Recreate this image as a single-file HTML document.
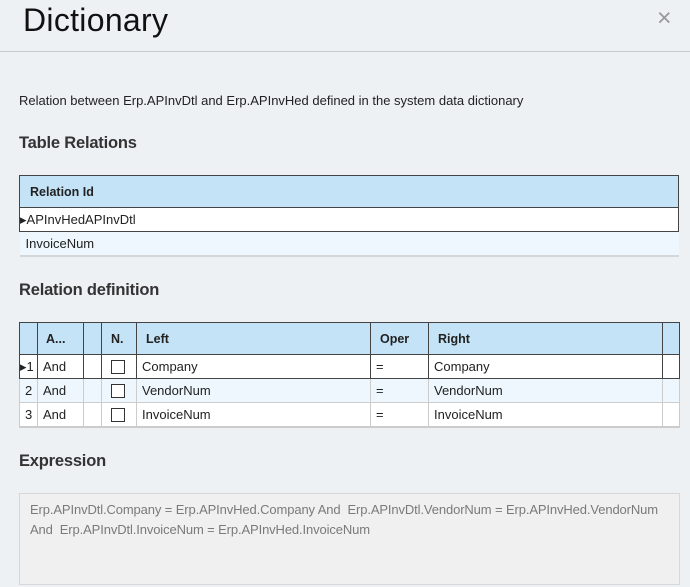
<!DOCTYPE html>
<html><head><style>
body{margin:0;width:690px;height:587px;overflow:hidden;background:#eef1f4;font-family:"Liberation Sans",sans-serif;color:#222;position:relative}
.a{position:absolute;white-space:nowrap}
h1{position:absolute;left:23px;top:2px;margin:0;font-weight:normal;font-size:32px;color:#111;letter-spacing:0.3px}
.h{font-size:16.5px;font-weight:bold;color:#333;letter-spacing:-0.2px}
table{position:absolute;border-collapse:collapse;font-size:13px;table-layout:fixed}
td{padding:0 0 0 5px;white-space:nowrap;overflow:hidden}
.hd td{background:#c4e3f6;font-weight:bold;font-size:12.5px;border:1px solid #444}
.cb{display:inline-block;width:12px;height:12px;border:1.5px solid #333;background:#fff;vertical-align:middle}
</style></head><body>
<h1>Dictionary</h1>
<div class="a" style="left:657px;top:4px;font-size:25px;color:#999">×</div>
<div class="a" style="left:0;top:51px;width:690px;height:1px;background:#c8ccd0"></div>
<div class="a" style="left:19px;top:93px;font-size:13px;letter-spacing:0;color:#222">Relation between Erp.APInvDtl and Erp.APInvHed defined in the system data dictionary</div>
<div class="a h" style="left:19px;top:134px">Table Relations</div>
<table style="left:19px;top:175px;width:660px">
<tr class="hd" style="height:32px"><td style="padding-left:10px">Relation Id</td></tr>
<tr style="height:24px"><td style="background:#fff;border:1px solid #444;padding-left:0">&#9656;APInvHedAPInvDtl</td></tr>
<tr style="height:24px"><td style="background:#edf7fd;border-bottom:2px solid #d4d6d8;padding-left:6px">InvoiceNum</td></tr>
</table>
<div class="a h" style="left:19px;top:281px">Relation definition</div>
<table style="left:19px;top:322px;width:660px">
<colgroup><col style="width:18px"><col style="width:46px"><col style="width:18px"><col style="width:35px"><col style="width:234px"><col style="width:58px"><col style="width:234px"><col style="width:17px"></colgroup>
<tr class="hd" style="height:32px"><td></td><td style="padding-left:8px">A...</td><td></td><td style="padding-left:9px">N.</td><td style="padding-left:9px">Left</td><td style="padding-left:9px">Oper</td><td style="padding-left:9px">Right</td><td></td></tr>
<tr style="height:24px;background:#fff"><td style="border:1px solid #444;padding-left:0">&#9656;1</td><td style="border:1px solid #444">And</td><td style="border:1px solid #444"></td><td style="border:1px solid #444;padding-left:9px"><span class="cb"></span></td><td style="border:1px solid #444">Company</td><td style="border:1px solid #444">=</td><td style="border:1px solid #444">Company</td><td style="border:1px solid #444"></td></tr>
<tr style="height:24px;background:#edf7fd"><td style="border:1px solid #ccc">2</td><td style="border:1px solid #ccc">And</td><td style="border:1px solid #ccc"></td><td style="border:1px solid #ccc;padding-left:9px"><span class="cb"></span></td><td style="border:1px solid #ccc">VendorNum</td><td style="border:1px solid #ccc">=</td><td style="border:1px solid #ccc">VendorNum</td><td style="border:1px solid #ccc"></td></tr>
<tr style="height:24px;background:#fff"><td style="border:1px solid #ccc;border-bottom:2px solid #ccc">3</td><td style="border:1px solid #ccc;border-bottom:2px solid #ccc">And</td><td style="border:1px solid #ccc;border-bottom:2px solid #ccc"></td><td style="border:1px solid #ccc;border-bottom:2px solid #ccc;padding-left:9px"><span class="cb"></span></td><td style="border:1px solid #ccc;border-bottom:2px solid #ccc">InvoiceNum</td><td style="border:1px solid #ccc;border-bottom:2px solid #ccc">=</td><td style="border:1px solid #ccc;border-bottom:2px solid #ccc">InvoiceNum</td><td style="border:1px solid #ccc;border-bottom:2px solid #ccc"></td></tr>
</table>
<div class="a h" style="left:19px;top:452px">Expression</div>
<div class="a" style="left:19px;top:493px;width:659px;height:90px;background:#f0f0f0;border:1px solid #d8d8d8"></div>
<div class="a" style="left:30px;top:500px;font-size:13px;letter-spacing:-0.12px;color:#7a7a7a;line-height:20px">Erp.APInvDtl.Company = Erp.APInvHed.Company And&nbsp; Erp.APInvDtl.VendorNum = Erp.APInvHed.VendorNum<br>And&nbsp; Erp.APInvDtl.InvoiceNum = Erp.APInvHed.InvoiceNum</div>
</body></html>
